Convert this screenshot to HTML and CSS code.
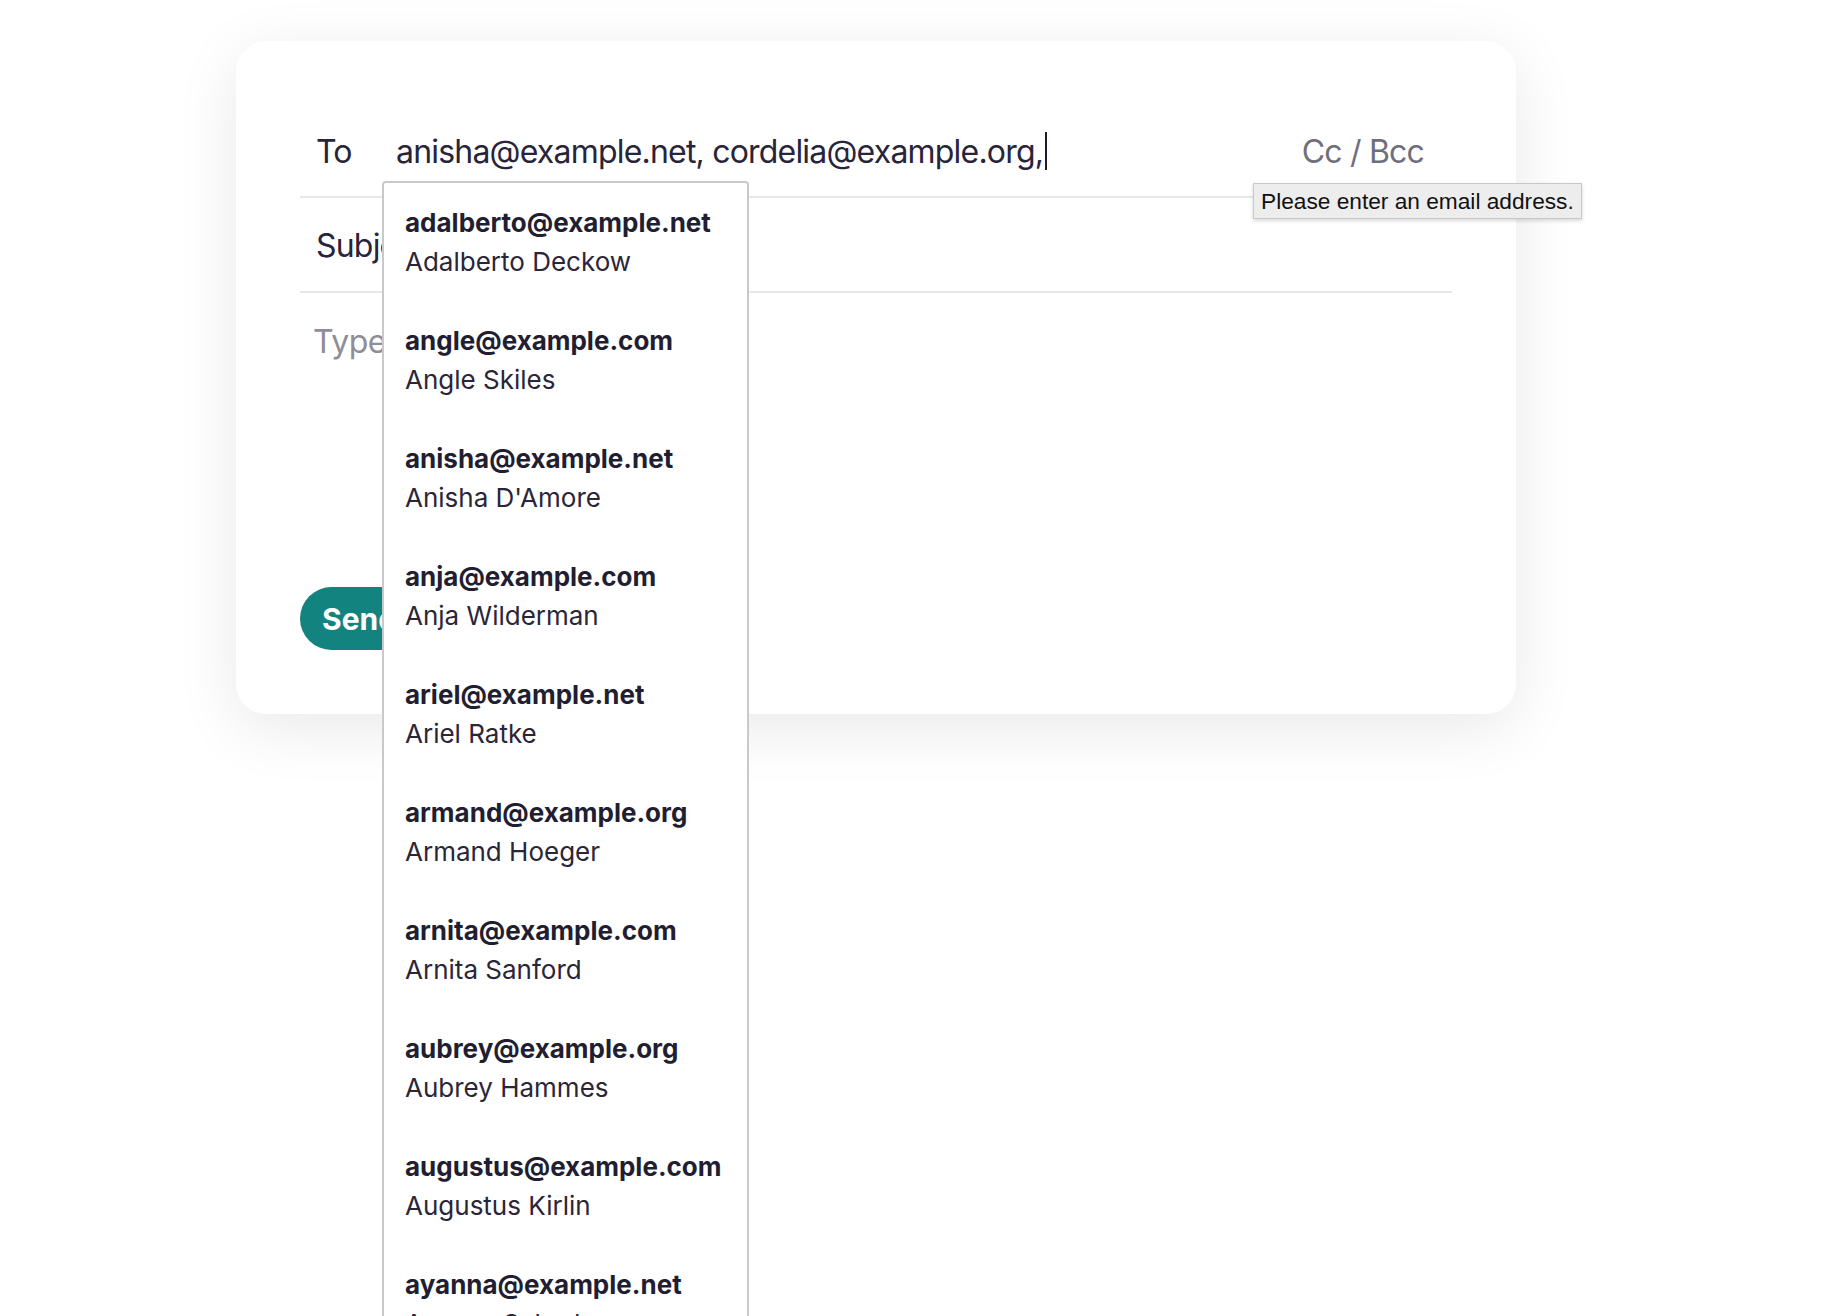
FILE: index.html
```html
<!DOCTYPE html>
<html lang="en">
<head>
<meta charset="utf-8">
<title>Compose</title>
<link rel="stylesheet" href="styles.css">
</head>
<body>
<main class="page">
  <form class="card">
    <div class="field field-to">
      <label class="label">To</label>
      <div class="value">anisha@example.net, cordelia@example.org,<span class="caret"></span></div>
      <span class="ccbcc">Cc / Bcc</span>
    </div>
    <div class="field field-subject">
      <label class="label">Subject</label>
      <div class="value"></div>
    </div>
    <div class="message">
      <span class="placeholder">Type your message</span>
    </div>
    <div class="actions">
      <button type="button" class="send">Send</button>
    </div>

    <ul class="suggest">
      <li><b>adalberto@example.net</b><span>Adalberto Deckow</span></li>
      <li><b>angle@example.com</b><span>Angle Skiles</span></li>
      <li><b>anisha@example.net</b><span>Anisha D'Amore</span></li>
      <li><b>anja@example.com</b><span>Anja Wilderman</span></li>
      <li><b>ariel@example.net</b><span>Ariel Ratke</span></li>
      <li><b>armand@example.org</b><span>Armand Hoeger</span></li>
      <li><b>arnita@example.com</b><span>Arnita Sanford</span></li>
      <li><b>aubrey@example.org</b><span>Aubrey Hammes</span></li>
      <li><b>augustus@example.com</b><span>Augustus Kirlin</span></li>
      <li><b>ayanna@example.net</b><span>Ayanna Schaden</span></li>
    </ul>

    <div class="tooltip">Please enter an email address.</div>
  </form>
</main>
</body>
</html>
```

FILE: styles.css
```css
html, body {
  margin: 0;
  padding: 0;
  overflow: hidden;
  background: #ffffff;
  height: 100%;
}

body {
  font-family: Inter, "Noto Sans", sans-serif;
  color: #28243a;
}

.page {
  padding: 41px 0 0 236px;
}

.card {
  position: relative;
  box-sizing: border-box;
  width: 1280px;
  height: 673px;
  padding: 63px 64px 64px;
  background: #ffffff;
  border-radius: 30px;
  box-shadow: 0 14px 64px rgba(0, 0, 0, 0.09);
}

.field {
  display: flex;
  align-items: center;
  height: 94px;
  box-sizing: border-box;
  border-bottom: 2px solid #e8e8ea;
  font-size: 32px;
  letter-spacing: -0.8px;
  padding-top: 2px;
}

.field-subject {
  height: 95px;
}

.label {
  width: 80px;
  padding-left: 16px;
  flex: none;
}

.value {
  flex: 1;
  display: flex;
  align-items: center;
  white-space: nowrap;
}

.caret {
  display: inline-block;
  width: 2px;
  height: 38px;
  margin-left: 2px;
  background: #1d1a2a;
}

.ccbcc {
  color: #6f6e7c;
  padding-right: 28px;
}

.message {
  height: 262px;
  box-sizing: border-box;
  padding: 25px 13px 0;
  font-size: 32px;
  line-height: 48px;
  letter-spacing: -0.5px;
}

.placeholder {
  color: #8f8d99;
}

.actions {
  margin-top: 32px;
  display: flex;
}

.send {
  height: 63px;
  padding: 0 22px;
  border: none;
  border-radius: 32px;
  background: #13837f;
  color: #ffffff;
  font-family: Inter, "Noto Sans", sans-serif;
  font-size: 30px;
  font-weight: 700;
}

.suggest {
  position: absolute;
  left: 146px;
  top: 140px;
  width: 367px;
  box-sizing: border-box;
  margin: 0;
  padding: 0;
  list-style: none;
  background: #ffffff;
  border: 2px solid #c9c9cb;
  border-radius: 4px;
  font-size: 26px;
  line-height: 39px;
  color: #231f33;
}

.suggest li {
  display: flex;
  flex-direction: column;
  padding: 20px 20px 20px 21px;
}

.suggest b {
  font-weight: 700;
  color: #221e32;
}

.suggest span {
  color: #2a2638;
}

.tooltip {
  position: absolute;
  left: 1017px;
  top: 142px;
  box-sizing: border-box;
  height: 36px;
  padding: 5px 7px;
  white-space: nowrap;
  background: #ededed;
  border: 1px solid #c8c8c8;
  box-shadow: 0 2px 4px rgba(0, 0, 0, 0.15);
  font-family: "Liberation Sans", Arial, sans-serif;
  font-size: 22.7px;
  line-height: 24px;
  color: #111111;
}
```
